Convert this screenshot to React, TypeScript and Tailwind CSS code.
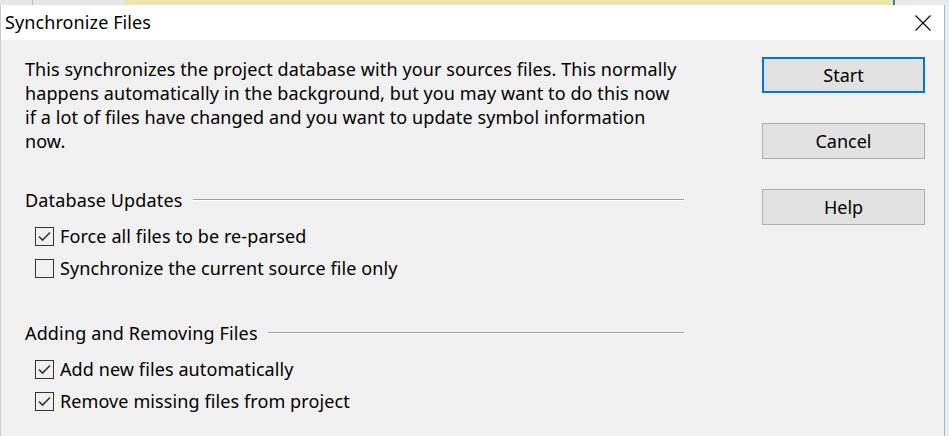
import React from "react";

const font = { fontFamily: '"Noto Sans", "Open Sans", sans-serif' };

function Check({ checked, label }: { checked: boolean; label: string }) {
  return (
    <div className="flex items-center h-[32px] pl-[10px]">
      <div className="w-[19px] h-[19px] border border-[#333333] bg-[#f0f0f0] flex items-center justify-center shrink-0">
        {checked && (
          <svg width="15" height="15" viewBox="0 0 15 15">
            <polyline points="2,7.5 5.5,11 13,3.5" fill="none" stroke="#333" strokeWidth="1.6" />
          </svg>
        )}
      </div>
      <span className="ml-[6px] text-[18px] leading-[24px] tracking-[0.1px] text-black whitespace-nowrap">{label}</span>
    </div>
  );
}

function Section({ title }: { title: string }) {
  return (
    <div className="flex items-center h-[24px]">
      <span className="text-[18px] leading-[24px] tracking-[0.15px] text-black whitespace-nowrap">{title}</span>
      <div className="flex-1 ml-[10px] flex flex-col">
        <div className="h-px bg-[#a0a0a0]" />
        <div className="h-px bg-white" />
      </div>
    </div>
  );
}

function Btn({ label, primary }: { label: string; primary?: boolean }) {
  return (
    <div
      className={
        "w-[163px] h-[36px] flex items-center justify-center bg-[#e1e1e1] text-[18px] text-black " +
        (primary ? "border-2 border-[#0078d7]" : "border border-[#adadad]")
      }
    >
      {label}
    </div>
  );
}

export default function App() {
  return (
    <div className="w-[949px] h-[436px] overflow-hidden bg-[#f0f0f0] flex flex-col" style={font}>
      <div className="h-[5px] flex shrink-0">
        <div className="w-[32px] bg-[#e6e6e6]" />
        <div className="w-px bg-[#b8b8b8]" />
        <div className="w-[92px] bg-[#e6e6e6]" />
        <div className="flex-1 bg-[#e9e6a9]" />
        <div className="w-[2px] bg-[#3c7ea6]" />
        <div className="w-[54px] bg-[#ece9ee]" />
      </div>
      <div className="flex flex-1 min-h-0">
        <div className="w-[944px] flex flex-col border-l border-[#c8c8c8]">
          <div className="h-[35px] bg-white flex items-center justify-between shrink-0">
            <span className="ml-[4px] text-[18px] tracking-[0.1px] text-black">Synchronize Files</span>
            <svg width="16" height="16" viewBox="0 0 16 16" className="mr-[13px]">
              <path d="M0.5 0.5 L15.5 15.5 M15.5 0.5 L0.5 15.5" stroke="#000" strokeWidth="1.1" />
            </svg>
          </div>
          <div className="flex flex-1">
            <div className="w-[683px] pl-[24px] pt-[17px]">
              <p className="text-[18px] leading-[24px] tracking-[0.1px] text-black whitespace-nowrap">
                This synchronizes the project database with your sources files. This normally
                <br />
                happens automatically in the background, but you may want to do this now
                <br />
                if a lot of files have changed and you want to update symbol information
                <br />
                now.
              </p>
              <div className="mt-[35px]">
                <Section title="Database Updates" />
              </div>
              <div className="mt-[8px]">
                <Check checked label="Force all files to be re-parsed" />
                <Check checked={false} label="Synchronize the current source file only" />
              </div>
              <div className="mt-[37px]">
                <Section title="Adding and Removing Files" />
              </div>
              <div className="mt-[8px]">
                <Check checked label="Add new files automatically" />
                <Check checked label="Remove missing files from project" />
              </div>
            </div>
            <div className="ml-[78px] pt-[17px] flex flex-col gap-[30px]">
              <Btn label="Start" primary />
              <Btn label="Cancel" />
              <Btn label="Help" />
            </div>
          </div>
        </div>
        <div className="flex-1 bg-[#ecebf0] border-l border-[#8fc0e0]" />
      </div>
    </div>
  );
}
